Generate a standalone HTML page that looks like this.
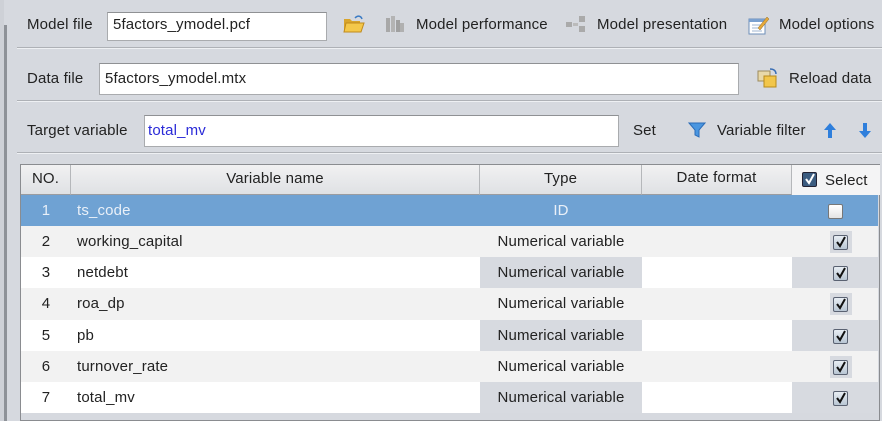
<!DOCTYPE html>
<html><head><style>
*{margin:0;padding:0;box-sizing:border-box}
body{width:882px;height:421px;background:#d6d9df;font-family:"Liberation Sans",Arial,sans-serif;font-size:15px;letter-spacing:0.15px;color:#222;position:relative;overflow:hidden}
.a{position:absolute}
.t{position:absolute;white-space:nowrap;line-height:16px}
.inp{position:absolute;background:#fff;border:1px solid #a9abae;border-top-color:#8f9194}
.sep{position:absolute;left:17px;right:0;height:2px;border-top:1px solid #aeb1b6;border-bottom:1px solid #eef0f3}
.hd{position:absolute;top:165px;height:30px;background:linear-gradient(#f1f1f2,#dfe1e4);border-right:1px solid #b5b7ba;border-bottom:1px solid #9a9ca0;text-align:center;line-height:28px;color:#222}
.row{position:absolute;left:21px;width:857px;height:31px}
.c{position:absolute;top:0;height:31px;line-height:32px}
.cb{position:absolute;width:15px;height:15px;border:1px solid #5a6272;border-radius:2px;background:linear-gradient(#e8edf3,#b9c6d4)}
</style></head><body>
<div class="a" style="left:4px;top:25px;width:3px;height:396px;background:#8e9298"></div>
<div class="a" style="left:0;top:0;width:4px;height:421px;background:#ced1d7"></div>

<div class="t" style="left:27px;top:17px">Model file</div>
<div class="inp" style="left:107px;top:12px;width:220px;height:29px"></div>
<div class="t" style="left:113px;top:17px">5factors_ymodel.pcf</div>
<svg class="a" style="left:343px;top:14px" width="22" height="20" viewBox="0 0 22 20"><path d="M1 5h6l2 2h8v10H1z" fill="#d9a52c"/><path d="M3 9h18l-3 9H1z" fill="#f4c84a" stroke="#c08a1c"/><path d="M12 4c3-3 6-2 7 1" stroke="#3b7bc4" stroke-width="1.5" fill="none"/></svg>
<svg class="a" style="left:385px;top:15px" width="20" height="18" viewBox="0 0 20 18"><rect x="1" y="3" width="4" height="14" fill="#a8a8a8"/><rect x="6" y="1" width="4" height="16" fill="#b4b4b4"/><rect x="11" y="5" width="4" height="12" fill="#a0a0a0"/><rect x="15" y="8" width="4" height="9" fill="#b0b0b0"/></svg>
<div class="t" style="left:416px;top:17px">Model performance</div>
<svg class="a" style="left:566px;top:16px" width="20" height="17" viewBox="0 0 20 17"><rect x="0" y="6" width="6" height="5" fill="#aaa"/><rect x="7" y="7" width="5" height="3" fill="#bbb"/><rect x="13" y="0" width="6" height="6" fill="#aaa"/><rect x="13" y="10" width="6" height="6" fill="#aaa"/></svg>
<div class="t" style="left:597px;top:17px">Model presentation</div>
<svg class="a" style="left:748px;top:15px" width="22" height="20" viewBox="0 0 22 20"><rect x="1" y="4" width="16" height="15" fill="#fff" stroke="#6d8fb8"/><rect x="1" y="4" width="16" height="3" fill="#7aa0cf"/><path d="M4 10h10M4 13h10M4 16h10" stroke="#9fb6d2"/><path d="M10 13l9-11 2 2-9 11z" fill="#e6a93a" stroke="#8a6a2a" stroke-width=".5"/></svg>
<div class="t" style="left:779px;top:17px">Model options</div>
<div class="sep" style="top:47px"></div>

<div class="t" style="left:27px;top:71px">Data file</div>
<div class="inp" style="left:99px;top:63px;width:640px;height:32px"></div>
<div class="t" style="left:105px;top:71px">5factors_ymodel.mtx</div>
<svg class="a" style="left:757px;top:67px" width="22" height="22" viewBox="0 0 22 22"><rect x="1" y="4" width="12" height="10" fill="#e8d8a8" stroke="#9c8a5c"/><rect x="7" y="9" width="12" height="11" fill="#f2c64a" stroke="#b88a1a"/><path d="M13 2c4 0 6 2 6 5" stroke="#3b6fb4" stroke-width="1.5" fill="none"/></svg>
<div class="t" style="left:789px;top:71px">Reload data</div>
<div class="sep" style="top:100px"></div>

<div class="t" style="left:27px;top:123px">Target variable</div>
<div class="inp" style="left:144px;top:115px;width:475px;height:32px"></div>
<div class="t" style="left:148px;top:123px;color:#2b2bd8">total_mv</div>
<div class="t" style="left:633px;top:123px">Set</div>
<svg class="a" style="left:688px;top:122px" width="18" height="16" viewBox="0 0 18 16"><path d="M1 1h16l-6 7v7l-4-2V8z" fill="#4a96e0" stroke="#2a6cb8"/></svg>
<div class="t" style="left:717px;top:123px">Variable filter</div>
<svg class="a" style="left:823px;top:122px" width="14" height="17" viewBox="0 0 14 17"><path d="M7 1l6 7H9v8H5V8H1z" fill="#2f7fdc"/></svg>
<svg class="a" style="left:858px;top:122px" width="14" height="17" viewBox="0 0 14 17"><path d="M7 16l6-7H9V1H5v8H1z" fill="#2f7fdc"/></svg>
<div class="sep" style="top:152px"></div>

<div class="a" style="left:20px;top:164px;width:860px;height:257px;border:1px solid #8a8c90;background:#d6d9df"></div>
<div class="hd" style="left:21px;width:50px">NO.</div>
<div class="hd" style="left:71px;width:409px">Variable name</div>
<div class="hd" style="left:480px;width:162px">Type</div>
<div class="hd" style="left:642px;width:150px;line-height:26px">Date format</div>
<div class="a" style="left:792px;top:165px;width:88px;height:30px;background:#f4f4f5"></div>
<div class="cb" style="left:802px;top:172px;background:#3b5c80;border-color:#223"><svg width="13" height="13" viewBox="0 0 13 13" style="position:absolute;left:0;top:0"><path d="M3 6l3 4 5-9" stroke="#fff" stroke-width="2" fill="none"/></svg></div>
<div class="t" style="left:825px;top:173px">Select</div>

<div class="row" style="top:195px;background:#6fa2d3;color:#e9f0f8">
<div class="c" style="left:0;width:50px;text-align:center">1</div>
<div class="c" style="left:56px">ts_code</div>
<div class="c" style="left:459px;width:162px;text-align:center">ID</div>
<div class="cb" style="left:807px;top:9px;background:linear-gradient(#fff,#e4e4e4);border-color:#777"></div>
</div>

<div class="row" style="top:226px;background:#f2f2f2"><div class="a" style="left:809px;top:5px;width:22px;height:22px;background:#d7dae0"></div><div class="c" style="left:0;width:50px;text-align:center">2</div><div class="c" style="left:56px">working_capital</div><div class="c" style="left:459px;width:162px;text-align:center">Numerical variable</div><div class="cb" style="left:812px;top:9px"><svg width="13" height="13" viewBox="0 0 13 13" style="position:absolute"><path d="M3 6l3 4 5-9" stroke="#111" stroke-width="2" fill="none"/></svg></div></div>
<div class="row" style="top:257px;background:#fff"><div class="a" style="left:459px;top:0;width:162px;height:31px;background:#d7dae0"></div><div class="a" style="left:771px;top:0;width:86px;height:31px;background:#d7dae0"></div><div class="c" style="left:0;width:50px;text-align:center">3</div><div class="c" style="left:56px">netdebt</div><div class="c" style="left:459px;width:162px;text-align:center">Numerical variable</div><div class="cb" style="left:812px;top:9px"><svg width="13" height="13" viewBox="0 0 13 13" style="position:absolute"><path d="M3 6l3 4 5-9" stroke="#111" stroke-width="2" fill="none"/></svg></div></div>
<div class="row" style="top:288px;height:32px;background:#f2f2f2"><div class="a" style="left:809px;top:5px;width:22px;height:22px;background:#d7dae0"></div><div class="c" style="left:0;width:50px;text-align:center">4</div><div class="c" style="left:56px">roa_dp</div><div class="c" style="left:459px;width:162px;text-align:center">Numerical variable</div><div class="cb" style="left:812px;top:9px"><svg width="13" height="13" viewBox="0 0 13 13" style="position:absolute"><path d="M3 6l3 4 5-9" stroke="#111" stroke-width="2" fill="none"/></svg></div></div>
<div class="row" style="top:320px;background:#fff"><div class="a" style="left:459px;top:0;width:162px;height:31px;background:#d7dae0"></div><div class="a" style="left:771px;top:0;width:86px;height:31px;background:#d7dae0"></div><div class="c" style="left:0;width:50px;text-align:center">5</div><div class="c" style="left:56px">pb</div><div class="c" style="left:459px;width:162px;text-align:center">Numerical variable</div><div class="cb" style="left:812px;top:9px"><svg width="13" height="13" viewBox="0 0 13 13" style="position:absolute"><path d="M3 6l3 4 5-9" stroke="#111" stroke-width="2" fill="none"/></svg></div></div>
<div class="row" style="top:351px;background:#f2f2f2"><div class="a" style="left:809px;top:5px;width:22px;height:22px;background:#d7dae0"></div><div class="c" style="left:0;width:50px;text-align:center">6</div><div class="c" style="left:56px">turnover_rate</div><div class="c" style="left:459px;width:162px;text-align:center">Numerical variable</div><div class="cb" style="left:812px;top:9px"><svg width="13" height="13" viewBox="0 0 13 13" style="position:absolute"><path d="M3 6l3 4 5-9" stroke="#111" stroke-width="2" fill="none"/></svg></div></div>
<div class="row" style="top:382px;background:#fff"><div class="a" style="left:459px;top:0;width:162px;height:31px;background:#d7dae0"></div><div class="a" style="left:771px;top:0;width:86px;height:31px;background:#d7dae0"></div><div class="c" style="left:0;width:50px;text-align:center">7</div><div class="c" style="left:56px">total_mv</div><div class="c" style="left:459px;width:162px;text-align:center">Numerical variable</div><div class="cb" style="left:812px;top:9px"><svg width="13" height="13" viewBox="0 0 13 13" style="position:absolute"><path d="M3 6l3 4 5-9" stroke="#111" stroke-width="2" fill="none"/></svg></div></div>
</body></html>
